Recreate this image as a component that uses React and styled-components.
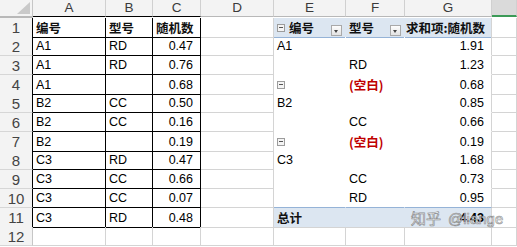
import React from "react";
import styled, { createGlobalStyle, css } from "styled-components";

const GlobalStyle = createGlobalStyle`
  body {
    margin: 0;
    background: #ffffff;
    font-family: "Liberation Sans", "Noto Sans CJK SC", sans-serif;
  }
`;

const GRID = "#d4d4d4";
const PIVOT_BG = "#dce6f1";
const PIVOT_LINE = "#95b3d7";
const COLUMNS = "33px 73px 47px 48px 73px 72px 59px 87px 1fr";

const Sheet = styled.div`
  position: relative;
  width: 517px;
  height: 247px;
  overflow: hidden;
`;

const Row = styled.div`
  display: grid;
  grid-template-columns: ${COLUMNS};
  height: ${(p) => (p.$head ? 18 : 19)}px;
`;

const Corner = styled.div`
  position: relative;
  background: #f3f3f3;
  border-right: 1px solid #c6c6c6;
  border-bottom: 1px solid #b8b8b8;
  box-sizing: border-box;
  &::after {
    content: "";
    position: absolute;
    right: 2px;
    bottom: 2px;
    width: 0;
    height: 0;
    border-left: 13px solid transparent;
    border-bottom: 12px solid #c9c9c9;
  }
`;

const ColHeader = styled.div`
  display: flex;
  align-items: center;
  justify-content: center;
  box-sizing: border-box;
  font-size: 13.5px;
  color: #3a3a3a;
  background: ${(p) => (p.$active ? "#dadada" : "#f3f3f3")};
  border-right: 1px solid #d0d0d0;
  border-bottom: ${(p) =>
    p.$active ? "2px solid #3c9a57" : `1px solid ${p.$edge ? "#000" : "#b8b8b8"}`};
`;

const RowHeader = styled.div`
  display: flex;
  align-items: center;
  justify-content: center;
  box-sizing: border-box;
  font-size: 15px;
  color: #444;
  background: #f3f3f3;
  border-right: 1px solid ${(p) => (p.$edge ? "#000" : "#c6c6c6")};
  border-bottom: 1px solid #d6d6d6;
`;

const tones = {
  head: css`
    background: ${PIVOT_BG};
    border-bottom-color: ${PIVOT_LINE};
    border-right-color: ${(p) => (p.$end ? GRID : PIVOT_BG)};
  `,
  body: css`
    border-bottom-color: #fff;
    border-right-color: ${(p) => (p.$end ? GRID : "#fff")};
  `,
  last: css`
    border-bottom-color: ${PIVOT_LINE};
    border-right-color: ${(p) => (p.$end ? GRID : "#fff")};
  `,
  total: css`
    background: ${PIVOT_BG};
    border-right-color: ${(p) => (p.$end ? GRID : PIVOT_BG)};
  `,
};

const Cell = styled.div`
  display: flex;
  align-items: center;
  justify-content: ${(p) => (p.$right ? "flex-end" : "flex-start")};
  gap: 4px;
  box-sizing: border-box;
  padding: 0 ${(p) => (p.$right ? 7 : 3)}px 0 ${(p) => (p.$tight ? 1 : 3)}px;
  font-size: 12.5px;
  color: #000;
  white-space: nowrap;
  border-right: 1px solid ${GRID};
  border-bottom: 1px solid ${GRID};
  ${(p) => p.$box && "border-color: #000;"}
  ${(p) => p.$tone && tones[p.$tone]}
`;

const Label = styled.span`
  font-family: "Noto Sans CJK SC", "Liberation Sans", sans-serif;
  font-weight: 700;
  font-size: 12.5px;
  color: ${(p) => (p.$red ? "#c00000" : "#111")};
`;

const Strong = styled.span`
  font-weight: 700;
`;

const Collapse = styled.span`
  position: relative;
  flex: none;
  width: 8px;
  height: 8px;
  box-sizing: border-box;
  border: 1px solid #9c9c9c;
  background: #f4f4f4;
  &::after {
    content: "";
    position: absolute;
    left: 1px;
    right: 1px;
    top: 2px;
    height: 1px;
    background: #555;
  }
`;

const FilterButton = styled.span`
  position: relative;
  flex: none;
  margin-left: auto;
  align-self: flex-end;
  margin-bottom: 1px;
  width: 11px;
  height: 11px;
  box-sizing: border-box;
  border: 1px solid #a9a9a9;
  background: linear-gradient(#fdfdfd, #e3e3e3);
  &::after {
    content: "";
    position: absolute;
    left: 2px;
    top: 4px;
    border-left: 2.5px solid transparent;
    border-right: 2.5px solid transparent;
    border-top: 3px solid #444;
  }
`;

const Watermark = styled.div`
  position: absolute;
  left: 411px;
  top: 211px;
  display: flex;
  gap: 7px;
  font-size: 15px;
  line-height: 15px;
  color: rgba(255, 255, 255, 0.8);
  -webkit-text-stroke: 0.7px rgba(100, 100, 100, 0.7);
  pointer-events: none;
`;

const letters = ["A", "B", "C", "D", "E", "F", "G", "", ""];

const rows = [
  { a: "编号", b: "型号", c: "随机数", head: true, tone: "head" },
  { a: "A1", b: "RD", c: "0.47", e: "A1", g: "1.91", tone: "body" },
  { a: "A1", b: "RD", c: "0.76", f: "RD", g: "1.23", tone: "body" },
  { a: "A1", b: "", c: "0.68", icon: true, f: "(空白)", g: "0.68", tone: "body" },
  { a: "B2", b: "CC", c: "0.50", e: "B2", g: "0.85", tone: "body" },
  { a: "B2", b: "CC", c: "0.16", f: "CC", g: "0.66", tone: "body" },
  { a: "B2", b: "", c: "0.19", icon: true, f: "(空白)", g: "0.19", tone: "body" },
  { a: "C3", b: "RD", c: "0.47", e: "C3", g: "1.68", tone: "body" },
  { a: "C3", b: "CC", c: "0.66", f: "CC", g: "0.73", tone: "body" },
  { a: "C3", b: "CC", c: "0.07", f: "RD", g: "0.95", tone: "last" },
  { a: "C3", b: "RD", c: "0.48", e: "总计", g: "4.43", tone: "total" },
  {},
];

function PivotCells({ row }) {
  const { tone } = row;
  if (tone === "head") {
    return (
      <>
        <Cell $tone={tone}>
          <Collapse />
          <Label>编号</Label>
          <FilterButton />
        </Cell>
        <Cell $tone={tone}>
          <Label>型号</Label>
          <FilterButton />
        </Cell>
        <Cell $tone={tone} $end $tight>
          <Label>求和项:随机数</Label>
        </Cell>
      </>
    );
  }
  if (tone === "total") {
    return (
      <>
        <Cell $tone={tone}>
          <Label>{row.e}</Label>
        </Cell>
        <Cell $tone={tone} />
        <Cell $tone={tone} $end $right>
          <Strong>{row.g}</Strong>
        </Cell>
      </>
    );
  }
  if (!tone) {
    return (
      <>
        <Cell />
        <Cell />
        <Cell />
      </>
    );
  }
  const blank = row.f === "(空白)";
  return (
    <>
      <Cell $tone={tone}>{row.icon ? <Collapse /> : row.e}</Cell>
      <Cell $tone={tone}>{blank ? <Label $red>{row.f}</Label> : row.f}</Cell>
      <Cell $tone={tone} $end $right>
        {row.g}
      </Cell>
    </>
  );
}

function App() {
  return (
    <Sheet>
      <GlobalStyle />
      <Row $head>
        <Corner />
        {letters.map((l, i) => (
          <ColHeader key={i} $edge={i < 3} $active={i === 7}>
            {l}
          </ColHeader>
        ))}
      </Row>
      {rows.map((row, i) => {
        const box = i < 11;
        return (
          <Row key={i}>
            <RowHeader $edge={box}>{i + 1}</RowHeader>
            <Cell $box={box}>{row.head ? <Label>{row.a}</Label> : row.a}</Cell>
            <Cell $box={box}>{row.head ? <Label>{row.b}</Label> : row.b}</Cell>
            <Cell $box={box} $right={!row.head}>
              {row.head ? <Label>{row.c}</Label> : row.c}
            </Cell>
            <Cell />
            <PivotCells row={row} />
            <Cell />
          </Row>
        );
      })}
      <Watermark>
        <span>知乎</span>
        <span>@liange</span>
      </Watermark>
    </Sheet>
  );
}

export default App;
